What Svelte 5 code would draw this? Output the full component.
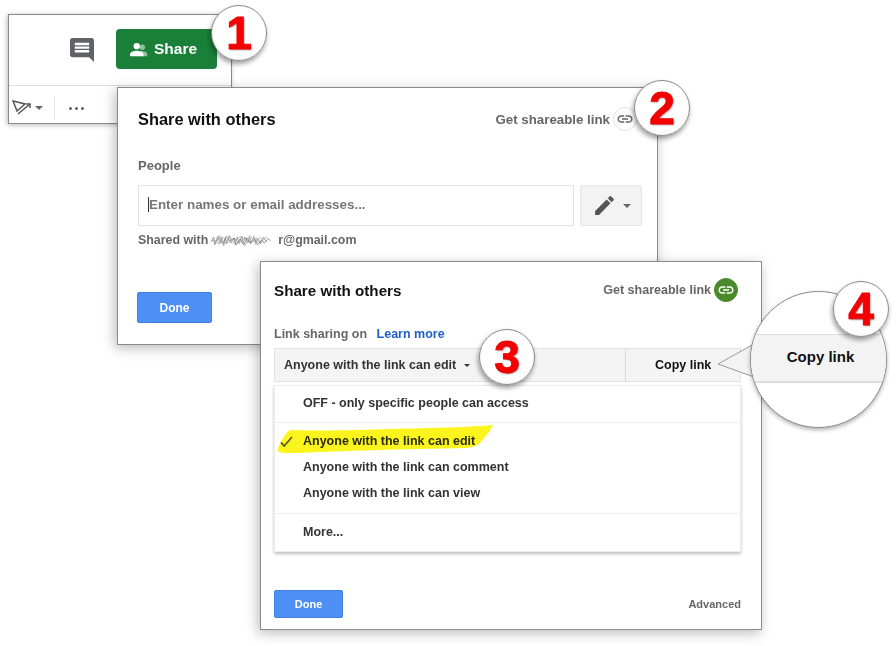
<script>
  const menuGroups = [
    ['OFF - only specific people can access'],
    ['Anyone with the link can edit', 'Anyone with the link can comment', 'Anyone with the link can view'],
    ['More...']
  ];
  const LINK = 'M3.9 12c0-1.71 1.39-3.1 3.1-3.1h4V7H7c-2.76 0-5 2.24-5 5s2.24 5 5 5h4v-1.9H7c-1.71 0-3.1-1.39-3.1-3.1zM8 13h8v-2H8v2zm9-6h-4v1.9h4c1.71 0 3.1 1.39 3.1 3.1s-1.39 3.1-3.1 3.1h-4V17h4c2.76 0 5-2.24 5-5s-2.24-5-5-5z';
</script>

<div class="canvas">
  <!-- docs toolbar -->
  <section class="toolbar">
    <div class="top-row">
      <svg class="comment" viewBox="2 2 20 20"><path d="M21.99 4c0-1.1-.89-2-1.99-2H4c-1.1 0-2 .9-2 2v12c0 1.1.9 2 2 2h14l4 4-.01-18zM18 14H6v-2h12v2zm0-3H6V9h12v2zm0-3H6V6h12v2z" /></svg>
      <div class="share-btn">
        <svg class="people-icon" viewBox="0 0 24 20">
          <circle cx="16.5" cy="7" r="3.6" fill="#8fc3a0" />
          <path d="M13 13c4-1.2 10-.6 10 3v3H15z" fill="#8fc3a0" />
          <circle cx="9" cy="5.5" r="4.2" fill="#fff" />
          <path d="M0 19v-2.500c0-3.300 5.500-4.800 9-4.800s9 1.500 9 4.800V19z" fill="#fff" />
        </svg>
        <span>Share</span>
      </div>
    </div>
    <div class="bottom-row">
      <svg class="pen" viewBox="0 0 20 18" fill="none" stroke="#555" stroke-width="1.500">
        <path d="M1 2l12 3-8 7z" />
        <path d="M6 15L18 5" />
        <path d="M14 5h4v4" />
      </svg>
      <i class="caret"></i>
      <i class="sep"></i>
      <div class="dots"><i></i><i></i><i></i></div>
    </div>
  </section>

  <!-- first dialog -->
  <section class="dialog first">
    <header>
      <h2>Share with others</h2>
      <div class="get-link">
        <span>Get shareable link</span>
        <i class="link-badge">
          <svg viewBox="0 0 24 24"><path d={LINK} fill="#666" /></svg>
        </i>
      </div>
    </header>
    <div class="label people">People</div>
    <div class="people-row">
      <div class="input"><i class="cursor"></i>Enter names or email addresses...</div>
      <div class="pencil-btn">
        <svg viewBox="0 0 24 24"><path d="M3 17.250V21h3.750L17.810 9.940l-3.750-3.750L3 17.250zM20.710 7.040c.39-.39.39-1.020 0-1.410l-2.340-2.340c-.39-.39-1.020-.39-1.410 0l-1.830 1.830 3.750 3.750 1.830-1.830z" fill="#555" /></svg>
        <i class="caret"></i>
      </div>
    </div>
    <div class="shared">
      <span>Shared with</span>
      <svg class="scribble" viewBox="0 0 68 14" fill="none" stroke-width=".8">
        <path stroke="#8a8a8a" d="M1 9l3-5 1 8 3-9 2 8 2-7 2 9 2-8 1 6 3-8 2 7 3-5 1 7 2-8 2 6 3-7 1 8 2-7 3 6 2-6 1 7 3-8 2 7 2-5 3 6 3-7 3 5" />
        <path stroke="#a5a5a5" d="M3 5l6 6 5-7 5 6 6-5 5 6 6-7 5 6 6-5 5 5 6-6 5 4" />
        <path stroke="#777" d="M2 7l4 3 3-6 4 7 4-8 3 5 5-3 2 7 4-6 4 6 3-7 4 5 4-4 3 6 4-5 3 3 4-4" />
        <path stroke="#bbb" d="M5 12l5-10 4 11 6-11 5 9 6-8 5 10 5-11 6 10 5-8 4 7" />
      </svg>
      <span>r@gmail.com</span>
    </div>
    <div class="done">Done</div>
  </section>

  <!-- second dialog -->
  <section class="dialog second">
    <header>
      <h2>Share with others</h2>
      <div class="get-link">
        <span>Get shareable link</span>
        <i class="link-badge on">
          <svg viewBox="0 0 24 24"><path d={LINK} fill="#fff" /></svg>
        </i>
      </div>
    </header>
    <div class="label sharing">Link sharing on <a href="#learn">Learn more</a></div>
    <div class="access-row">
      <div class="access">Anyone with the link can edit <i class="caret dark"></i></div>
      <div class="copy">Copy link</div>
    </div>
    <div class="menu">
      {#each menuGroups as group, g}
        <div class="group">
          {#each group as item, i}
            <div class="item" class:selected={g === 1 && i === 0}>
              {#if g === 1 && i === 0}
                <svg class="marker" viewBox="0 0 218 30"><path d="M0 26C3 18 8 8 13 5c30 1 70 0 100-1 40-1 85-2 103-4-4 8-10 14-13 18-3 3-7 4-13 5-60 1-130 3-170 5H6z" fill="#fbf51d" /></svg>
                <svg class="check" viewBox="0 0 14 12" fill="none" stroke="#5a5a1a" stroke-width="1.800"><path d="M1 7l3.500 4L13 1" /></svg>
              {/if}
              <span>{item}</span>
            </div>
          {/each}
        </div>
      {/each}
    </div>
    <footer>
      <div class="done">Done</div>
      <span class="advanced">Advanced</span>
    </footer>
  </section>

  <!-- magnified copy link -->
  <svg class="pointer" viewBox="0 0 40 40"><path d="M38 1L2 21l36 13z" fill="#f3f3f3" stroke="#9a9a9a" /></svg>
  <div class="lens">
    <div class="lens-strip">Copy link</div>
  </div>

  <div class="num n1">1</div>
  <div class="num n2">2</div>
  <div class="num n3">3</div>
  <div class="num n4">4</div>
</div>

<style>
  :global(body) {
    background: #fff;
    font-family: "Liberation Sans", Arial, sans-serif;
  }

  .canvas {
    position: relative;
    width: 896px;
    height: 646px;
    overflow: hidden;
    color: #333;
    font-weight: 700;
    font-size: 12.5px;
    filter: blur(0.3px);
  }

  i {
    display: block;
    font-style: normal;
  }

  .toolbar {
    position: absolute;
    left: 8px;
    top: 14px;
    width: 224px;
    height: 110px;
    box-sizing: border-box;
    background: #fff;
    border: 1px solid #8a8a8a;
    box-shadow: -1px 1px 5px rgba(0, 0, 0, 0.28);
    display: flex;
    flex-direction: column;
  }

  .top-row {
    height: 70px;
    flex: none;
    border-bottom: 1px solid #ddd;
    display: flex;
    align-items: center;
    justify-content: flex-end;
    gap: 22px;
    padding-right: 14px;
  }

  .comment {
    width: 24px;
    height: 24px;
    fill: #5f6368;
  }

  .share-btn {
    width: 101px;
    height: 40px;
    margin-top: -2px;
    background: #1a8039;
    border-radius: 4px;
    color: #fff;
    font-size: 15.5px;
    display: flex;
    align-items: center;
    gap: 6px;
    padding-left: 14px;
    box-sizing: border-box;
  }

  .people-icon {
    width: 18px;
    height: 15px;
  }

  .bottom-row {
    flex: 1;
    display: flex;
    align-items: center;
    padding: 7px 0 0 3px;
  }

  .pen {
    width: 20px;
    height: 18px;
  }

  .caret {
    width: 0;
    height: 0;
    border-left: 4.500px solid transparent;
    border-right: 4.500px solid transparent;
    border-top: 4.500px solid #666;
  }

  .bottom-row .caret {
    margin-left: 3px;
  }

  .sep {
    width: 1px;
    height: 24px;
    background: #e3e3e3;
    margin-left: 11px;
  }

  .dots {
    display: flex;
    gap: 3px;
    margin-left: 14px;
  }

  .dots i {
    width: 3px;
    height: 3px;
    border-radius: 50%;
    background: #5f6368;
  }

  .dialog {
    position: absolute;
    box-sizing: border-box;
    background: #fff;
    border: 1px solid #8a8a8a;
    display: flex;
    flex-direction: column;
    box-shadow: -2px 3px 12px rgba(0, 0, 0, 0.28);
  }

  .first {
    left: 117px;
    top: 87px;
    width: 541px;
    height: 258px;
    padding: 19px 15px 0 20px;
  }

  .second {
    left: 260px;
    top: 261px;
    width: 502px;
    height: 369px;
    padding: 16px 20px 11px 13px;
  }

  header {
    display: flex;
    justify-content: space-between;
    align-items: center;
    height: 24px;
  }

  .first header {
    padding-right: 5px;
  }

  .second header {
    padding-right: 3px;
  }

  h2 {
    margin: 0;
    font-size: 15.2px;
    font-weight: 700;
    color: #111;
  }

  .first h2 {
    font-size: 16.4px;
  }

  .get-link {
    display: flex;
    align-items: center;
    gap: 3px;
    color: #666;
  }

  .first .get-link {
    font-size: 13.3px;
  }

  .link-badge {
    width: 24px;
    height: 24px;
    box-sizing: border-box;
    border-radius: 50%;
    border: 1px solid #e2e2e2;
    display: flex;
    align-items: center;
    justify-content: center;
  }

  .link-badge svg {
    width: 18px;
    height: 18px;
  }

  .link-badge.on {
    background: #4a8a2c;
    border-color: #4a8a2c;
  }

  .label {
    color: #666;
    line-height: 15px;
  }

  .label.people {
    margin-top: 27px;
    font-size: 13px;
  }

  .people-row {
    display: flex;
    gap: 6px;
    margin-top: 12px;
  }

  .input {
    width: 436px;
    height: 41px;
    box-sizing: border-box;
    border: 1px solid #e2e2e2;
    color: #777;
    font-size: 13.4px;
    display: flex;
    align-items: center;
    padding: 0 0 2px 9px;
  }

  .cursor {
    width: 1px;
    height: 15px;
    background: #333;
  }

  .pencil-btn {
    width: 62px;
    height: 41px;
    box-sizing: border-box;
    background: #f3f3f3;
    border: 1px solid #e6e6e6;
    border-radius: 2px;
    display: flex;
    align-items: center;
    justify-content: center;
    gap: 6px;
  }

  .pencil-btn svg {
    width: 25px;
    height: 25px;
  }

  .shared {
    margin-top: 6px;
    color: #666;
    font-size: 12.4px;
    display: flex;
    align-items: center;
    gap: 2px;
    height: 15px;
  }

  .scribble {
    width: 66px;
    height: 14px;
    filter: blur(0.4px);
  }

  .done {
    width: 75px;
    height: 31px;
    box-sizing: border-box;
    background: #4d8ff5;
    border: 1px solid #3f7fe6;
    border-radius: 2px;
    color: #fff;
    font-size: 12px;
    display: flex;
    align-items: center;
    justify-content: center;
  }

  .first .done {
    margin: 45px 0 0 -1px;
  }

  .sharing {
    margin-top: 25px;
  }

  .sharing a {
    color: #1f5fc7;
    text-decoration: none;
    margin-left: 6px;
  }

  .access-row {
    display: flex;
    margin-top: 6px;
    height: 34px;
    flex: none;
    box-sizing: border-box;
    background: #f4f4f4;
    border: 1px solid #e2e2e2;
  }

  .access {
    width: 351px;
    box-sizing: border-box;
    border-right: 1px solid #d8d8d8;
    padding-left: 9px;
    display: flex;
    align-items: center;
    gap: 8px;
    color: #333;
  }

  .caret.dark {
    border-top-color: #333;
    border-left-width: 3.500px;
    border-right-width: 3.500px;
    border-top-width: 3.500px;
  }

  .copy {
    flex: 1;
    display: flex;
    align-items: center;
    padding-left: 29px;
    color: #111;
  }

  .menu {
    margin-top: 3px;
    border: 1px solid #ececec;
    box-shadow: 0 2px 3px rgba(0, 0, 0, 0.25);
    background: #fff;
    display: flex;
    flex-direction: column;
  }

  .group {
    padding: 5px 0 7px;
    border-bottom: 1px solid #eee;
  }

  .group:first-child {
    padding: 4px 0 6px;
  }

  .group:last-child {
    padding: 5px 0 6px;
    border-bottom: 0;
  }

  .item {
    position: relative;
    height: 26px;
    line-height: 26px;
    padding-left: 28px;
    color: #333;
  }

  .item span {
    position: relative;
  }

  .item.selected span {
    color: #2b2b10;
  }

  .marker {
    position: absolute;
    left: 2px;
    top: -3px;
    width: 218px;
    height: 30px;
  }

  .check {
    position: absolute;
    left: 5px;
    top: 8px;
    width: 13px;
    height: 11px;
  }

  footer {
    margin-top: auto;
    display: flex;
    align-items: center;
    justify-content: space-between;
  }

  .second .done {
    width: 69px;
    height: 28px;
    font-size: 11px;
  }

  .advanced {
    font-size: 11px;
    color: #666;
  }

  .pointer {
    position: absolute;
    left: 716px;
    top: 343px;
    width: 40px;
    height: 40px;
  }

  .lens {
    position: absolute;
    left: 750px;
    top: 291px;
    width: 137px;
    height: 137px;
    box-sizing: border-box;
    border-radius: 50%;
    border: 1px solid #8a8a8a;
    background: #fff;
    overflow: hidden;
    box-shadow: 0 2px 4px rgba(0, 0, 0, 0.3);
    display: flex;
    align-items: center;
  }

  .lens-strip {
    width: 100%;
    height: 44px;
    margin-top: -3px;
    background: #f3f3f3;
    border-top: 1px solid #ddd;
    border-bottom: 2px solid #ddd;
    display: flex;
    align-items: center;
    justify-content: center;
    padding: 0 0 2px 4px;
    font-size: 15px;
    color: #111;
  }

  .num {
    position: absolute;
    width: 56px;
    height: 56px;
    box-sizing: border-box;
    border-radius: 50%;
    border: 1px solid #888;
    background: radial-gradient(circle at 50% 40%, #fff 60%, #f2f2f2 100%);
    box-shadow: -1px 3px 5px rgba(0, 0, 0, 0.4);
    display: flex;
    align-items: center;
    justify-content: center;
    font-size: 46px;
    font-weight: 700;
    color: #f40000;
    text-shadow: 1px 1px 2px rgba(0, 0, 0, 0.45);
    -webkit-text-stroke: 1px #f40000;
  }

  .n1 { left: 211px; top: 5px; }
  .n2 { left: 634px; top: 80px; }
  .n3 { left: 479px; top: 329px; }
  .n4 { left: 833px; top: 281px; }
</style>
